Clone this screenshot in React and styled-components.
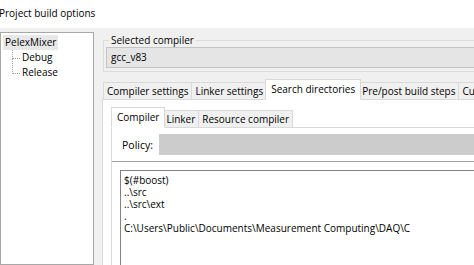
import styled, { createGlobalStyle } from 'styled-components';

const GlobalStyle = createGlobalStyle`
  body {
    margin: 0;
    overflow: hidden;
    font-family: "Open Sans", "Noto Sans", sans-serif;
    font-size: 10px;
    color: #000;
  }
`;

const Window = styled.div`
  width: 474px;
  height: 265px;
  overflow: hidden;
  background: #f0f0f0;
`;

const TitleBar = styled.div`
  height: 28px;
  line-height: 26px;
  background: #fff;
  font-size: 10px;
  margin-left: -1px;
  white-space: nowrap;
`;

const Body = styled.div`
  display: flex;
  padding-top: 4px;
  height: 233px;
`;

const Tree = styled.div`
  width: 92px;
  flex-shrink: 0;
  background: #fff;
  border: 1px solid #a8a8a8;
  padding-top: 2px;
`;

const TreeRow = styled.div`
  position: relative;
  height: 15px;
`;

const TreeNode = styled.div`
  height: 15px;
  line-height: 15px;
  margin-left: ${(p) => (p.child ? '19px' : '2px')};
  padding: 0 2px;
  display: inline-block;
  background: ${(p) => (p.selected ? '#e8e8e8' : 'transparent')};
  white-space: nowrap;
`;

const TreeLine = styled.span`
  position: absolute;
  left: 11px;
  top: ${(p) => (p.first ? '0' : '-7px')};
  height: ${(p) => (p.first ? '8px' : '15px')};
  width: 7px;
  border-left: 1px dotted #a0a0a0;
  border-bottom: 1px dotted #a0a0a0;
`;

const Main = styled.div`
  width: 620px;
  flex-shrink: 0;
  padding-left: 9px;
`;

const GroupBox = styled.fieldset`
  margin: 0;
  margin-top: 1px;
  padding: 0 0 3px 2px;
  border: 1px solid #dcdcdc;
  border-radius: 0;
`;

const Legend = styled.legend`
  padding: 0 2px;
  margin-left: 3px;
  line-height: 14px;
`;

const Combo = styled.div`
  height: 19px;
  line-height: 19px;
  padding-left: 4px;
  background: ${(p) => (p.disabled ? '#cccccc' : '#e5e5e5')};
  border: 1px solid ${(p) => (p.disabled ? '#cccccc' : '#c4c4c4')};
  flex: 1;
`;

const Tabs = styled.div`
  margin-top: 7px;
  margin-left: -1px;
`;

const TabStrip = styled.div`
  display: flex;
  align-items: flex-end;
  margin-left: 2px;
  position: relative;
  z-index: 1;
  margin-bottom: -1px;
`;

const Tab = styled.div`
  height: ${(p) => (p.active ? '19px' : '16px')};
  line-height: ${(p) => (p.active ? '18px' : '16px')};
  padding: 0 ${(p) => (p.active ? '5px' : '3px')};
  margin-right: ${(p) => (p.active ? '-2px' : '0')};
  margin-left: ${(p) => (p.active ? '-2px' : '-1px')};
  background: ${(p) => (p.active ? '#fff' : '#f0f0f0')};
  border: 1px solid #d9d9d9;
  border-bottom-color: ${(p) => (p.active ? '#fff' : '#d9d9d9')};
  position: relative;
  z-index: ${(p) => (p.active ? 2 : 1)};
  white-space: nowrap;
`;

const TabPanel = styled.div`
  background: #fff;
  border: 1px solid #d9d9d9;
  padding: ${(p) => p.pad || '0'};
  height: ${(p) => p.h}px;
`;

const PolicyRow = styled.div`
  display: flex;
  align-items: center;
  gap: 6px;
  padding: 6px 0 0 10px;
  font-size: 10.5px;
`;

const Separator = styled.div`
  border-top: 1px solid #a0a0a0;
  margin-top: 6px;
`;

const Paths = styled.div`
  margin: 8px 0 0 8px;
  border: 1px solid #828282;
  border-right: none;
  height: 120px;
  padding: 3px 3px 0;
  line-height: 12px;
  white-space: pre;
`;

const paths = [
  '$(#boost)',
  '..\\src',
  '..\\src\\ext',
  '.',
  'C:\\Users\\Public\\Documents\\Measurement Computing\\DAQ\\C',
];

export default function App() {
  return (
    <Window>
      <GlobalStyle />
      <TitleBar>Project build options</TitleBar>
      <Body>
        <Tree>
          <TreeRow>
            <TreeNode selected>PelexMixer</TreeNode>
          </TreeRow>
          <TreeRow>
            <TreeLine first />
            <TreeNode child>Debug</TreeNode>
          </TreeRow>
          <TreeRow>
            <TreeLine />
            <TreeNode child>Release</TreeNode>
          </TreeRow>
        </Tree>
        <Main>
          <GroupBox>
            <Legend>Selected compiler</Legend>
            <Combo>gcc_v83</Combo>
          </GroupBox>
          <Tabs>
            <TabStrip>
              <Tab>Compiler settings</Tab>
              <Tab>Linker settings</Tab>
              <Tab active>Search directories</Tab>
              <Tab>Pre/post build steps</Tab>
              <Tab>Custom variables</Tab>
            </TabStrip>
            <TabPanel pad="7px 0 0 8px" h={170}>
              <TabStrip>
                <Tab active>Compiler</Tab>
                <Tab>Linker</Tab>
                <Tab>Resource compiler</Tab>
              </TabStrip>
              <TabPanel h={140}>
                <PolicyRow>
                  <span>Policy:</span>
                  <Combo disabled />
                </PolicyRow>
                <Separator />
                <Paths>{paths.join('\n')}</Paths>
              </TabPanel>
            </TabPanel>
          </Tabs>
        </Main>
      </Body>
    </Window>
  );
}
